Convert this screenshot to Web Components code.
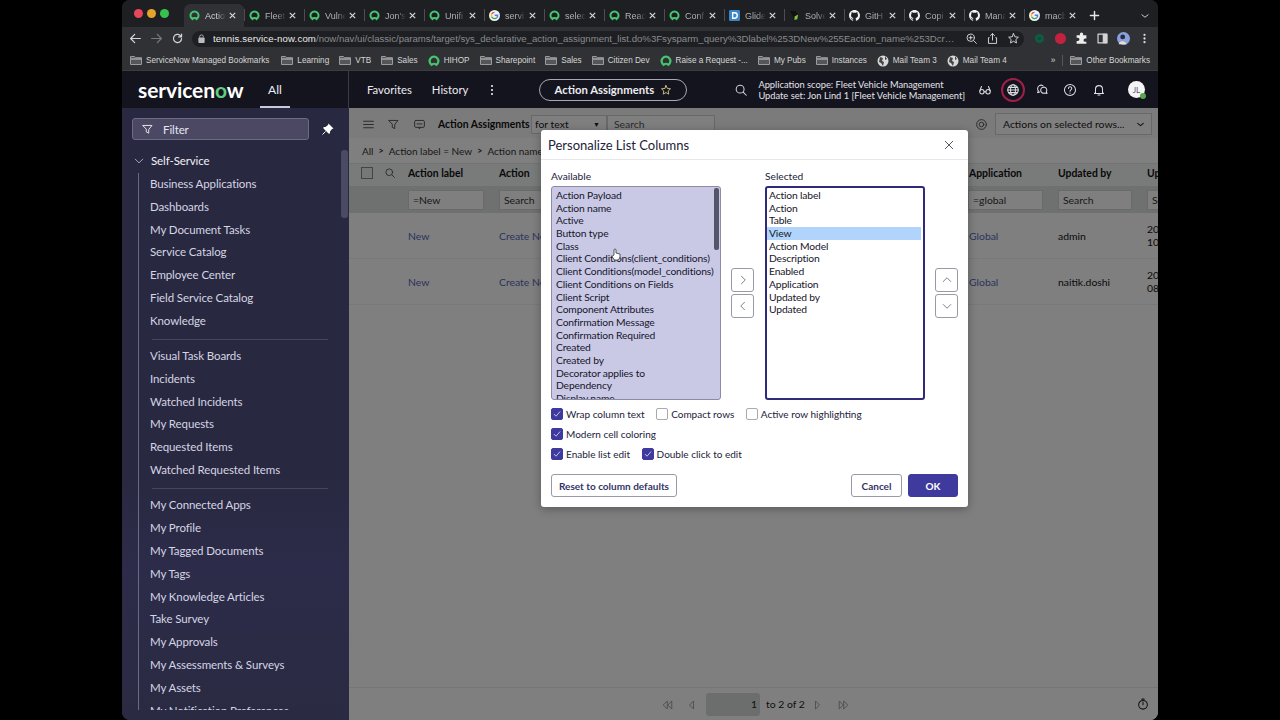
<!DOCTYPE html>
<html lang="en">
<head>
<meta charset="utf-8">
<title>Action Assignments</title>
<style>
	html, body { margin: 0; height: 100%; background: #000; overflow: hidden; }
	body { display: flex; justify-content: center; font-family: Lato, "Liberation Sans", sans-serif; }
</style>
</head>
<body>
<app-shell>
	<browser-chrome slot="chrome"></browser-chrome>
	<sn-header slot="header"></sn-header>
	<sn-sidebar slot="sidebar"></sn-sidebar>
	<list-view slot="main"></list-view>
	<columns-dialog slot="dialog"></columns-dialog>
</app-shell>

<script>
const ICONS = {
	sn: `<svg viewBox="0 0 12 12"><path d="M3.6 9.8A4.4 4.4 0 1 1 8.4 9.8C7.6 8.4 4.4 8.4 3.6 9.8Z" fill="none" stroke="#46c46f" stroke-width="2.2"/></svg>`,
	google: `<svg viewBox="0 0 12 12"><circle cx="6" cy="6" r="6" fill="#f1f1f1"/><path d="M6 2.6A3.4 3.4 0 0 0 3 4.4" fill="none" stroke="#e8453c" stroke-width="1.5"/><path d="M3 4.4a3.4 3.4 0 0 0 0 3.2" fill="none" stroke="#f9bb2d" stroke-width="1.5"/><path d="M3 7.6a3.4 3.4 0 0 0 5.4.8" fill="none" stroke="#34a853" stroke-width="1.5"/><path d="M8.4 8.4A3.4 3.4 0 0 0 9.4 5.7H6.2" fill="none" stroke="#4285f4" stroke-width="1.5"/></svg>`,
	github: `<svg viewBox="0 0 16 16"><path fill="#f2f2f2" d="M8 0C3.58 0 0 3.58 0 8c0 3.54 2.29 6.53 5.47 7.59.4.07.55-.17.55-.38 0-.19-.01-.82-.01-1.49-2.01.37-2.53-.49-2.69-.94-.09-.23-.48-.94-.82-1.13-.28-.15-.68-.52-.01-.53.63-.01 1.08.58 1.23.82.72 1.21 1.87.87 2.33.66.07-.52.28-.87.51-1.07-1.78-.2-3.64-.89-3.64-3.95 0-.87.31-1.59.82-2.15-.08-.2-.36-1.02.08-2.12 0 0 .67-.21 2.2.82.64-.18 1.32-.27 2-.27.68 0 1.36.09 2 .27 1.53-1.04 2.2-.82 2.2-.82.44 1.1.16 1.92.08 2.12.51.56.82 1.27.82 2.15 0 3.07-1.87 3.75-3.65 3.95.29.25.54.73.54 1.48 0 1.07-.01 1.93-.01 2.2 0 .21.15.46.55.38A8.013 8.013 0 0016 8c0-4.42-3.58-8-8-8z"/></svg>`,
	glide: `<svg viewBox="0 0 12 12"><rect width="12" height="12" rx="1.5" fill="#3a86c8"/><path d="M4 3h2a3 3 0 0 1 0 6H4Z" fill="none" stroke="#fff" stroke-width="1.5"/></svg>`,
	solve: `<svg viewBox="0 0 12 12"><path d="M1 1l6 0 3 4-2 6-3-2-1-3Z" fill="#111"/><path d="M6 7l4-2-1 5-3 1Z" fill="#7cc243"/></svg>`,
	folder: `<svg viewBox="0 0 12 10"><path d="M.5 1.5h4l1 1.2h6v6.8H.5Z" fill="#55565a" stroke="#9a9b9e"/><path d="M1 4h10" stroke="#c9c9c9"/></svg>`,
	globeGrey: `<svg viewBox="0 0 12 12"><circle cx="6" cy="6" r="5.5" fill="#d8d8d8"/><path d="M3 2l3 1-1 3 2 1-1 4-2-3-2-1Z M8 1l2 3-2 1Z" fill="#444"/></svg>`,
	close: `<svg viewBox="0 0 10 10"><path d="M2 2l6 6M8 2l-6 6" fill="none" stroke="currentColor" stroke-width="1.3"/></svg>`
};

const stroke = (d, w = 1.2) => `<svg viewBox="0 0 16 16" fill="none" stroke="currentColor" stroke-width="${w}" stroke-linecap="round" stroke-linejoin="round">${d}</svg>`;

class AppShell extends HTMLElement {
	constructor() {
		super();
		this.attachShadow({ mode: "open" });
		this.shadowRoot.innerHTML = `
			<style>
				:host { display: flex; flex-direction: column; width: 1036px; height: 720px; background: #282840; border-radius: 8px; overflow: hidden; }
				.app { flex: 1; display: flex; min-height: 0; }
				.main { flex: 1; position: relative; min-width: 0; background: #fff; }
				.veil { position: absolute; inset: 0; background: rgba(0, 0, 0, 0.5); }
			</style>
			<slot name="chrome"></slot>
			<slot name="header"></slot>
			<div class="app">
				<slot name="sidebar"></slot>
				<div class="main">
					<slot name="main"></slot>
					<div class="veil"></div>
					<slot name="dialog"></slot>
				</div>
			</div>
		`;
	}
}

class BrowserChrome extends HTMLElement {
	constructor() {
		super();
		this.attachShadow({ mode: "open" });
	}

	connectedCallback() {
		const tabs = [
			["sn", "Actio"], ["sn", "Fleet"], ["sn", "Vulne"], ["sn", "Jon's"], ["sn", "Unifi"],
			["google", "servi"], ["sn", "selec"], ["sn", "Read"], ["sn", "Conf"], ["glide", "Glide"],
			["solve", "Solve"], ["github", "GitH"], ["github", "Copi"], ["github", "Mana"], ["google", "macb"]
		];
		const marks = [
			["folder", "ServiceNow Managed Bookmarks"], ["folder", "Learning"], ["folder", "VTB"], ["folder", "Sales"],
			["sn", "HIHOP"], ["folder", "Sharepoint"], ["folder", "Sales"], ["folder", "Citizen Dev"],
			["sn", "Raise a Request -..."], ["folder", "My Pubs"], ["folder", "Instances"],
			["globeGrey", "Mail Team 3"], ["globeGrey", "Mail Team 4"]
		];
		this.shadowRoot.innerHTML = `
			<style>
				:host { display: block; height: 70px; font-family: "Liberation Sans", Arial, sans-serif; color: #d6d6d6; }
				svg { display: block; }
				.strip { height: 27px; background: #1e1f22; display: flex; align-items: flex-end; }
				.lights { width: 62px; height: 27px; box-sizing: border-box; padding-left: 12px; display: flex; gap: 4px; align-items: center; }
				.lights i { width: 9px; height: 9px; border-radius: 50%; }
				.tab { width: 60px; height: 23px; box-sizing: border-box; padding-left: 5px; display: flex; align-items: center; gap: 5px; font-size: 9px; color: #b0b0b0; position: relative; }
				.tab.on { background: #303134; border-radius: 6px 6px 0 0; color: #d0d0d0; }
				.tab:not(.on):not(:nth-child(2))::before { content: ""; position: absolute; left: 0; top: 5px; bottom: 6px; width: 1px; background: #4c4d50; }
				.tab .fav { width: 11px; height: 11px; flex: none; }
				.tab .name { width: 22px; overflow: hidden; white-space: nowrap; -webkit-mask-image: linear-gradient(90deg, #000 55%, transparent 95%); mask-image: linear-gradient(90deg, #000 55%, transparent 95%); flex: none; }
				.tab .x { width: 9px; height: 9px; flex: none; color: #d8d8d8; margin-left: -4px; }
				.plus { width: 20px; color: #e6e6e6; height: 23px; display: flex; align-items: center; justify-content: center; }
				.plus svg { width: 13px; height: 13px; }
				.more { margin-left: auto; width: 18px; height: 23px; display: flex; align-items: center; color: #ccc; }
				.more svg { width: 10px; height: 10px; }
				.bar { height: 23px; background: #303134; display: flex; align-items: center; padding-left: 3px; }
				.slot { width: 21px; height: 16px; display: flex; align-items: center; justify-content: center; color: #d4d4d4; flex: none; }
				.slot svg { width: 13px; height: 13px; }
				.slot.dim { color: #77787b; }
				.pill { width: 832px; height: 16px; margin: 0 5px 0 4px; background: #1e1f22; border-radius: 8px; display: flex; align-items: center; flex: none; }
				.pill .lock { width: 21px; padding-right: 2px; box-sizing: content-box; display: flex; justify-content: center; color: #bbb; }
				.pill .lock svg { width: 9px; height: 9px; }
				.url { width: 743px; margin-right: 5px; flex: none; font-size: 9.6px; color: #8a8b8e; white-space: nowrap; overflow: hidden; }
				.url b { font-weight: 400; color: #ececec; letter-spacing: 0.15px; }
				.dot { width: 9px; height: 9px; border-radius: 50%; }
				.marks { height: 20px; background: #303134; display: flex; align-items: center; padding-left: 8px; gap: 10px; font-size: 8.2px; color: #d6d6d6; white-space: nowrap; }
				.mark { display: flex; align-items: center; gap: 4px; }
				.mark:first-child { margin-right: 2px; }
				.mark span { display: block; width: 12px; height: 11px; }
				.end { margin-left: auto; padding-right: 8px; display: flex; align-items: center; gap: 7px; }
				.sep { width: 1px; height: 11px; background: #55565a; }
			</style>
			<div class="strip">
				<div class="lights"><i style="background:#e7475a"></i><i style="background:#e3a32d"></i><i style="background:#37c24d"></i></div>
				${tabs.map(([icon, name], i) => `
					<div class="tab ${i === 0 ? "on" : ""}">
						<span class="fav">${ICONS[icon]}</span><span class="name">${name}</span><span class="x">${ICONS.close}</span>
					</div>`).join("")}
				<div class="plus">${stroke('<path d="M8 3v10M3 8h10"/>', 1.8)}</div>
				<div class="more">${stroke('<path d="M3 6l5 4 5-4"/>', 1.6)}</div>
			</div>
			<div class="bar">
				<div class="slot">${stroke('<path d="M14 8H2M7 3L2 8l5 5"/>', 1.5)}</div>
				<div class="slot dim">${stroke('<path d="M2 8h12M9 3l5 5-5 5"/>', 1.5)}</div>
				<div class="slot">${stroke('<path d="M13 8a5 5 0 1 1-1.5-3.6L13 6V2.5M13 6H9.5"/>', 1.5)}</div>
				<div class="pill">
					<span class="lock"><svg viewBox="0 0 10 10"><rect x="1.5" y="4" width="7" height="6" rx="1" fill="currentColor"/><path d="M3 4V3a2 2 0 0 1 4 0v1" fill="none" stroke="currentColor"/></svg></span>
					<span class="url"><b>tennis.service-now.com</b>/now/nav/ui/classic/params/target/sys_declarative_action_assignment_list.do%3Fsysparm_query%3Dlabel%253DNew%255Eaction_name%253Dcr…</span>
					<div class="slot">${stroke('<circle cx="7" cy="7" r="4.5"/><path d="M10.5 10.5L14 14M5 7h4M7 5v4"/>')}</div>
					<div class="slot">${stroke('<path d="M4 7H3v7h10V7h-1M8 10V2M5.5 4.5L8 2l2.500 2.500"/>')}</div>
					<div class="slot">${stroke('<path d="M8 2l1.800 3.900 4.200.500-3.100 2.900.800 4.200L8 11.400l-3.700 2.100.800-4.200L2 6.400l4.200-.500Z"/>')}</div>
				</div>
				<div class="slot"><span class="dot" style="background:#14463a;box-shadow:inset 0 0 0 3px #0f5a40"></span></div>
				<div class="slot"><span class="dot" style="background:#c3223f;width:11px;height:11px"></span></div>
				<div class="slot"><svg viewBox="0 0 16 16"><path fill="#eee" d="M6 2.500a2 2 0 0 1 4 0V4h4v4h-1.500a2 2 0 0 0 0 4H14v2.500H2V11h1.500a2 2 0 0 0 0-4H2V4h4Z"/></svg></div>
				<div class="slot">${stroke('<rect x="2.500" y="2.500" width="11" height="11"/><rect x="9" y="3" width="4" height="10" fill="currentColor"/>', 1.5)}</div>
				<div class="slot"><svg viewBox="0 0 16 16"><circle cx="8" cy="8" r="8" fill="#8aa2dc"/><circle cx="7" cy="6" r="3" fill="#2a2a44"/><path d="M2 15c1-5 8-5 10 0Z" fill="#e8dccb"/></svg></div>
				<div class="slot"><svg viewBox="0 0 16 16" fill="#ddd"><circle cx="8" cy="3.500" r="1.400"/><circle cx="8" cy="8" r="1.400"/><circle cx="8" cy="12.500" r="1.400"/></svg></div>
			</div>
			<div class="marks">
				${marks.map(([icon, name]) => `<div class="mark"><span>${ICONS[icon]}</span>${name}</div>`).join("")}
				<div class="end">
					<span>»</span><i class="sep"></i>
					<div class="mark"><span>${ICONS.folder}</span>Other Bookmarks</div>
				</div>
			</div>
		`;
	}
}

class SnHeader extends HTMLElement {
	constructor() {
		super();
		this.attachShadow({ mode: "open" });
	}

	connectedCallback() {
		this.shadowRoot.innerHTML = `
			<style>
				:host { display: flex; height: 38px; background: #14141e; color: #ececf1; font-size: 11.3px; align-items: stretch; border-top: 1px solid #3c3c40; box-sizing: border-box; }
				svg { display: block; }
				.brand { width: 227px; box-sizing: border-box; padding-left: 16px; display: flex; align-items: center; border-right: 1px solid #3a3a48; flex: none; }
				.logo { width: 122px; font-size: 21px; font-weight: 700; color: #fff; letter-spacing: -0.1px; flex: none; line-height: 1; }
				.logo i { font-style: normal; color: #5fce7d; }
				.all { width: 30px; height: 100%; display: flex; align-items: center; justify-content: center; box-sizing: border-box; border-bottom: 2px solid #c9c6e0; border-top: 2px solid transparent; font-size: 12px; }
				.nav { display: flex; align-items: center; padding-left: 18px; flex: 1; }
				.nav > span { margin-right: 20px; }
				.dots { width: 8px; color: #eee; }
				.pill { margin-left: 43px; width: 148px; height: 22px; box-sizing: border-box; border: 1px solid #a8a8b4; border-radius: 11px; display: flex; align-items: center; justify-content: center; gap: 6px; font-weight: 700; font-size: 11.3px; flex: none; }
				.pill svg { width: 12px; height: 12px; color: #d9c78a; }
				.search { margin-left: 47px; width: 14px; height: 14px; color: #d2d2d8; flex: none; }
				.scope { margin-left: 10px; width: 212px; flex: none; font-size: 9.3px; line-height: 11px; white-space: nowrap; color: #e4e4ea; }
				.ico { width: 28.500px; display: flex; justify-content: center; flex: none; color: #dcdce2; }
				.ico svg { width: 14px; height: 14px; }
				.ring { width: 24px; height: 24px; margin: 0 2.250px; border: 2px solid #a01f47; box-sizing: border-box; border-radius: 50%; display: flex; align-items: center; justify-content: center; }
				.avatar { margin-left: 15px; width: 17px; height: 17px; border-radius: 50%; background: #f4f4f4; color: #55556a; font-size: 8px; display: flex; align-items: center; justify-content: center; position: relative; flex: none; }
				.avatar::after { content: ""; position: absolute; right: -1px; bottom: -1px; width: 6px; height: 6px; border-radius: 50%; background: #58a84c; }
			</style>
			<div class="brand">
				<div class="logo">servicen<i>o</i>w</div>
				<div class="all">All</div>
			</div>
			<div class="nav">
				<span>Favorites</span>
				<span>History</span>
				<div class="dots"><svg viewBox="0 0 8 16" fill="currentColor" width="8" height="14"><circle cx="4" cy="3.500" r="1.200"/><circle cx="4" cy="8" r="1.200"/><circle cx="4" cy="12.500" r="1.200"/></svg></div>
				<div class="pill">Action Assignments ${stroke('<path d="M8 2l1.800 3.900 4.200.500-3.100 2.900.800 4.200L8 11.400l-3.700 2.100.800-4.200L2 6.400l4.200-.500Z"/>')}</div>
				<div class="search">${stroke('<circle cx="7" cy="7" r="4.500"/><path d="M10.500 10.500L14 14"/>')}</div>
				<div class="scope">Application scope: Fleet Vehicle Management<br>Update set: Jon Lind 1 [Fleet Vehicle Management]</div>
				<div class="ico">${stroke('<circle cx="4.500" cy="10" r="2.500"/><circle cx="11.500" cy="10" r="2.500"/><path d="M7 10h2M2 9l2-5M14 9l-2-5"/>')}</div>
				<div class="ico"><div class="ring">${stroke('<circle cx="8" cy="8" r="6"/><ellipse cx="8" cy="8" rx="2.800" ry="6"/><path d="M2 8h12M3 5h10M3 11h10"/>')}</div></div>
				<div class="ico">${stroke('<path d="M9 3a4 4 0 0 0-6 3.500c0 1 .3 1.700.8 2.300L3 11l2.300-.7"/><path d="M6.500 8a3.500 3.500 0 1 1 6.500 2l.7 2-2.200-.600A3.500 3.500 0 0 1 6.500 8Z"/>')}</div>
				<div class="ico">${stroke('<circle cx="8" cy="8" r="6.300"/><path d="M6.200 6.200a1.900 1.900 0 1 1 2.800 1.700c-.7.400-1 .800-1 1.500M8 11.500v.2"/>')}</div>
				<div class="ico">${stroke('<path d="M4 11V7a4 4 0 0 1 8 0v4l1.200 1H2.800ZM6.800 13.800h2.400"/>')}</div>
				<div class="avatar">JL</div>
			</div>
		`;
	}
}

class SnSidebar extends HTMLElement {
	constructor() {
		super();
		this.attachShadow({ mode: "open" });
	}

	connectedCallback() {
		const groups = [
			["Business Applications", "Dashboards", "My Document Tasks", "Service Catalog", "Employee Center", "Field Service Catalog", "Knowledge"],
			["Visual Task Boards", "Incidents", "Watched Incidents", "My Requests", "Requested Items", "Watched Requested Items"],
			["My Connected Apps", "My Profile", "My Tagged Documents", "My Tags", "My Knowledge Articles", "Take Survey", "My Approvals", "My Assessments & Surveys", "My Assets", "My Notification Preferences"]
		];
		this.shadowRoot.innerHTML = `
			<style>
				:host { display: flex; flex-direction: column; width: 227px; flex: none; box-sizing: border-box; background: linear-gradient(180deg, #282840 0 60%, #2c2c4a 75%, #2a2a42 100%); color: #d5d5e3; font-size: 11.5px; letter-spacing: -0.1px; position: relative; height: 100%; }
				svg { display: block; }
				.top { display: flex; align-items: center; padding: 10px 0 0 10px; }
				.filter { width: 177px; height: 22px; box-sizing: border-box; background: #4a4862; border: 1px solid #6d6b84; border-radius: 3px; display: flex; align-items: center; padding-left: 8px; gap: 9px; color: #e6e6f0; }
				.filter svg { width: 13px; height: 13px; }
				.pin { margin-left: 13px; width: 12px; height: 12px; color: #fff; }
				.tree { margin: 9px 0 0; }
				.head { display: flex; align-items: center; height: 23px; color: #f0f0f6; padding-left: 12px; gap: 7px; }
				.head svg { width: 10px; height: 10px; color: #c5c5d5; }
				.items { margin: 1px 0 0 16px; border-left: 1px solid #6a6a84; padding-left: 11px; height: 537px; overflow: hidden; }
				.item { height: 22.800px; line-height: 22.800px; white-space: nowrap; }
				hr { border: 0; border-top: 1px solid #45455f; margin: 6px 21px 5.500px 2px; }
				.scroll { position: absolute; left: 219px; top: 42px; width: 7px; height: 68px; background: #4a4a63; border-radius: 3px; }
			</style>
			<div class="top">
				<div class="filter">${stroke('<path d="M2.500 3h11L9.500 8v4.500l-3-1.500V8Z"/>')}<span>Filter</span></div>
				<div class="pin"><svg viewBox="0 0 12 12" fill="currentColor"><path d="M6.500 0.500L11.500 5.500 10 6 8 8.500 8 10.500 6.500 10.500 1.500 5.500 1.500 4 3.500 4 6 2Z"/><path d="M3.500 8.500L0.500 11.500" stroke="currentColor"/></svg></div>
			</div>
			<div class="tree">
				<div class="head">${stroke('<path d="M2 5l6 6 6-6"/>', 1.300)}<span>Self-Service</span></div>
				<div class="items">
					${groups.map((g) => g.map((t) => `<div class="item">${t.replace("&", "&amp;")}</div>`).join("")).join("<hr>")}
				</div>
			</div>
			<div class="scroll"></div>
		`;
	}
}

class ListView extends HTMLElement {
	constructor() {
		super();
		this.attachShadow({ mode: "open" });
	}

	connectedCallback() {
		const grid = "59px 91px 470px 89px 89px 1fr";
		const rows = [
			["New", "Create New", "Global", "admin", "20", "10"],
			["New", "Create New", "Global", "naitik.doshi", "20", "08"]
		];
		this.shadowRoot.innerHTML = `
			<style>
				:host { display: flex; flex-direction: column; height: 100%; font-size: 10.4px; color: #111; overflow: hidden; }
				svg { display: block; }
				.bar { height: 30px; box-sizing: border-box; padding-top: 2px; display: flex; align-items: center; background: #f6f7f7; flex: none; color: #555; }
				.tool { width: 13px; height: 13px; flex: none; }
				.bar b { margin-left: 12px; color: #111; white-space: nowrap; width: 93px; }
				.sel { height: 19px; box-sizing: border-box; border: 1px solid #cfd2d2; background: #fff; display: flex; align-items: center; padding: 0 6px 0 3px; color: #222; flex: none; white-space: nowrap; }
				.crumbs { height: 25px; display: flex; align-items: center; padding-left: 13px; gap: 5px; color: #333; white-space: nowrap; flex: none; font-size: 10px; }
				.row { display: grid; grid-template-columns: ${grid}; flex: none; align-items: center; overflow: hidden; }
				.titles { height: 23px; padding-bottom: 4px; background: #f3f4f4; font-weight: 700; border-top: 1px solid #e6e6e6; box-sizing: border-box; }
				.titles .lead { display: flex; align-items: center; padding-left: 12px; gap: 11px; color: #555; }
				.box { width: 12px; height: 12px; box-sizing: border-box; border: 1px solid #888; background: #eee; }
				.filters { height: 27px; background: #dfe2e2; }
				.filters span { display: flex; align-items: center; width: calc(100% - 15px); height: 20px; box-sizing: border-box; background: #fff; border: 1px solid #d2d4d4; padding-left: 4px; color: #333; white-space: nowrap; overflow: hidden; }
				.data { height: 46px; border-bottom: 1px solid #f0f0f0; box-sizing: border-box; }
				.data a { color: #5568b8; white-space: nowrap; }
				.data .two { line-height: 13px; white-space: pre; }
				.fill { flex: 1; }
				.foot { height: 32px; border-top: 1px solid #eaeaea; display: flex; align-items: center; color: #222; flex: none; }
				.foot .pg { color: #999; width: 12px; height: 10px; flex: none; }
				.foot .num { width: 54px; height: 23px; margin-left: 9px; box-sizing: border-box; background: #d9dcdc; border-radius: 3px; display: flex; align-items: center; justify-content: flex-end; padding-right: 3px; flex: none; }
				.clock { margin-left: auto; margin-right: 9px; width: 12px; height: 12px; color: #222; }
			</style>
			<div class="bar">
				<div class="tool" style="margin-left:13px">${stroke('<path d="M2 4h12M2 8h12M2 12h12"/>')}</div>
				<div class="tool" style="margin-left:12px">${stroke('<path d="M2.500 3h11L9.500 8v5l-3-1.500V8Z"/>')}</div>
				<div class="tool" style="margin-left:13px">${stroke('<rect x="2" y="3" width="12" height="8.500" rx="1.500"/><path d="M7 11.500l1 2 1-2M5 7.300h6"/>')}</div>
				<b>Action Assignments</b>
				<div class="sel" style="width:76px;justify-content:space-between"><span>for text</span><span style="font-size:7px">▼</span></div>
				<div class="sel" style="width:108px;padding-left:6px;color:#555">Search</div>
				<div class="tool" style="margin-left:260px">${stroke('<circle cx="8" cy="8" r="6"/><circle cx="8" cy="8" r="2.800"/>')}</div>
				<div class="sel" style="width:157px;height:22px;margin-left:7px;padding-left:7px;justify-content:space-between"><span>Actions on selected rows...</span>
					<span style="width:9px;height:9px">${stroke('<path d="M3 6l5 4 5-4"/>', 1.800)}</span></div>
			</div>
			<div class="crumbs"><span>All</span><b style="font-size:9px">&gt;</b><span>Action label = New</span><b style="font-size:9px">&gt;</b><span>Action name</span></div>
			<div class="row titles">
				<div class="lead"><i class="box"></i><span style="width:12px;height:12px">${stroke('<circle cx="7" cy="7" r="4.500"/><path d="M10.500 10.500L14 14"/>')}</span></div>
				<div>Action label</div><div>Action</div><div>Application</div><div>Updated by</div><div>Updated</div>
			</div>
			<div class="row filters">
				<div></div><div><span>=New</span></div><div><span>Search</span></div><div style="margin-left:-1px"><span>=global</span></div><div><span>Search</span></div><div><span style="width:60px">Search</span></div>
			</div>
			${rows.map((r) => `
				<div class="row data">
					<div></div><div><a>${r[0]}</a></div><div><a>${r[1]}</a></div><div><a>${r[2]}</a></div><div>${r[3]}</div><div class="two">${r[4]}\n${r[5]}</div>
				</div>`).join("")}
			<div class="fill"></div>
			<div class="foot">
				<div class="pg" style="margin-left:312px">${stroke('<path d="M8 3L3 8l5 5ZM14 3L9 8l5 5Z"/>')}</div>
				<div class="pg" style="margin-left:12px">${stroke('<path d="M11 3L6 8l5 5Z"/>')}</div>
				<div class="num">1</div>
				<span style="margin-left:6px;white-space:nowrap">to 2 of 2</span>
				<div class="pg" style="margin-left:7px">${stroke('<path d="M5 3l5 5-5 5Z"/>')}</div>
				<div class="pg" style="margin-left:14px">${stroke('<path d="M2 3l5 5-5 5ZM8 3l5 5-5 5Z"/>')}</div>
				<div class="clock">${stroke('<circle cx="8" cy="9" r="5.800"/><path d="M8 9V5.500M6.500 1.500h3"/>', 1.400)}</div>
			</div>
		`;
	}
}

class ListBox extends HTMLElement {
	constructor() {
		super();
		this.attachShadow({ mode: "open" });
	}

	connectedCallback() {
		const items = (this.getAttribute("items") || "").split("|");
		const active = this.getAttribute("active");
		this.shadowRoot.innerHTML = `
			<style>
				:host { display: block; height: 214px; box-sizing: border-box; overflow: hidden; position: relative; border-radius: 3px; font-size: 10.300px; letter-spacing: -0.150px; color: #16162a; }
				:host([variant="all"]) { background: #c9c9e6; border: 1px solid #8b8ba8; padding: 2px 0 0 4px; }
				:host([variant="focus"]) { background: #fff; border: 2px solid #2f2a7c; padding: 1px 2px 0 0; }
				div { height: 12.700px; line-height: 12.700px; white-space: nowrap; }
				:host([variant="focus"]) div { padding-left: 2px; }
				.on { background: #b0d4fb; }
				i { position: absolute; right: 1px; top: 1px; width: 5px; height: 62px; background: #55556a; border-radius: 2px; }
			</style>
			${items.map((t) => `<div class="${t === active ? "on" : ""}">${t}</div>`).join("")}
			${this.getAttribute("variant") === "all" ? "<i></i>" : ""}
		`;
	}
}

class CheckOption extends HTMLElement {
	constructor() {
		super();
		this.attachShadow({ mode: "open" });
		this.shadowRoot.innerHTML = `
			<style>
				:host { display: inline-flex; align-items: center; gap: 3px; font-size: 10px; color: #22223a; white-space: nowrap; }
				.box { width: 12px; height: 12px; box-sizing: border-box; border: 1px solid #a9a9b4; border-radius: 2px; background: #fff; display: block; }
				:host([checked]) .box { background: #3f3a9e; border-color: #3f3a9e; }
				svg { display: none; width: 10px; height: 10px; color: #dfe0f5; }
				:host([checked]) svg { display: block; }
			</style>
			<span class="box">${stroke('<path d="M3.500 8.500l3 3 6-7"/>', 1.300)}</span>
			<slot></slot>
		`;
	}
}

class ArrowButton extends HTMLElement {
	static get observedAttributes() {
		return ["dir"];
	}

	constructor() {
		super();
		this.attachShadow({ mode: "open" });
	}

	attributeChangedCallback() {
		const paths = { right: "M6 3l5 5-5 5", left: "M10 3L5 8l5 5", up: "M3 10l5-5 5 5", down: "M3 6l5 5 5-5" };
		this.shadowRoot.innerHTML = `
			<style>
				:host { display: flex; align-items: center; justify-content: center; width: 23px; height: 24px; box-sizing: border-box; border: 1px solid #9a9aa6; border-radius: 3px; color: #555566; background: #fff; }
				svg { width: 12px; height: 12px; display: block; }
			</style>
			${stroke(`<path d="${paths[this.getAttribute("dir")]}"/>`, 1)}
		`;
	}
}

class ColumnsDialog extends HTMLElement {
	constructor() {
		super();
		this.attachShadow({ mode: "open" });
	}

	connectedCallback() {
		const available = "Action Payload|Action name|Active|Button type|Class|Client Conditions(client_conditions)|Client Conditions(model_conditions)|Client Conditions on Fields|Client Script|Component Attributes|Confirmation Message|Confirmation Required|Created|Created by|Decorator applies to|Dependency|Display name";
		const selected = "Action label|Action|Table|View|Action Model|Description|Enabled|Application|Updated by|Updated";
		this.shadowRoot.innerHTML = `
			<style>
				:host { position: absolute; left: 192px; top: 22px; width: 427px; height: 377px; background: #fff; border-radius: 3px; box-shadow: 0 2px 10px rgba(0, 0, 0, 0.3); color: #22223a; display: flex; flex-direction: column; }
				svg { display: block; }
				header { height: 30px; flex: none; box-sizing: border-box; border-bottom: 1px solid #e8e8ec; padding: 0 13px 0 7px; display: flex; align-items: center; justify-content: space-between; font-size: 13px; }
				.x { width: 12px; height: 12px; color: #33334a; }
				.body { padding: 10px 10px 0; flex: 1; display: flex; flex-direction: column; }
				.cols { display: grid; grid-template-columns: 170px 44px 160px 43px; grid-template-rows: 16px 214px; }
				.cap { font-size: 10.2px; line-height: 12px; }
				.moves { display: flex; flex-direction: column; gap: 2px; align-items: flex-start; padding-left: 10px; align-self: center; }
				.opts { margin-top: 4px; display: flex; flex-direction: column; }
				.opts div { height: 20px; display: flex; align-items: center; gap: 11.500px; }
				footer { margin-top: 10px; display: flex; gap: 6px; align-items: center; }
				.btn { height: 23px; box-sizing: border-box; border: 1px solid #9a9aa6; border-radius: 3px; display: flex; align-items: center; justify-content: center; font-size: 10px; font-weight: 700; color: #343468; background: #fff; }
				.ok { background: #3f3a9e; border-color: #3f3a9e; color: #fff; }
				.hand { position: absolute; left: 70px; top: 118px; width: 11px; height: 13px; }
			</style>
			<header>
				<span>Personalize List Columns</span>
				<span class="x">${stroke('<path d="M3 3l10 10M13 3L3 13"/>', 1.100)}</span>
			</header>
			<div class="body">
				<div class="cols">
					<div class="cap">Available</div><div></div><div class="cap">Selected</div><div></div>
					<list-box variant="all" items="${available}"></list-box>
					<div class="moves"><arrow-button dir="right"></arrow-button><arrow-button dir="left"></arrow-button></div>
					<list-box variant="focus" items="${selected}" active="View"></list-box>
					<div class="moves"><arrow-button dir="up"></arrow-button><arrow-button dir="down"></arrow-button></div>
				</div>
				<div class="opts">
					<div><check-option checked>Wrap column text</check-option><check-option>Compact rows</check-option><check-option>Active row highlighting</check-option></div>
					<div><check-option checked>Modern cell coloring</check-option></div>
					<div><check-option checked>Enable list edit</check-option><check-option checked>Double click to edit</check-option></div>
				</div>
				<footer>
					<div class="btn" style="width:126px;margin-right:auto">Reset to column defaults</div>
					<div class="btn" style="width:51px">Cancel</div>
					<div class="btn ok" style="width:50px">OK</div>
				</footer>
			</div>
			<svg class="hand" viewBox="0 0 11 13"><path d="M3 7V2a1 1 0 0 1 2 0v3l4 1v3l-1.500 3h-4L1 8.500Z" fill="#fff" stroke="#333" stroke-width="0.800"/></svg>
		`;
	}
}

customElements.define("app-shell", AppShell);
customElements.define("browser-chrome", BrowserChrome);
customElements.define("sn-header", SnHeader);
customElements.define("sn-sidebar", SnSidebar);
customElements.define("list-view", ListView);
customElements.define("list-box", ListBox);
customElements.define("check-option", CheckOption);
customElements.define("arrow-button", ArrowButton);
customElements.define("columns-dialog", ColumnsDialog);
</script>
</body>
</html>
